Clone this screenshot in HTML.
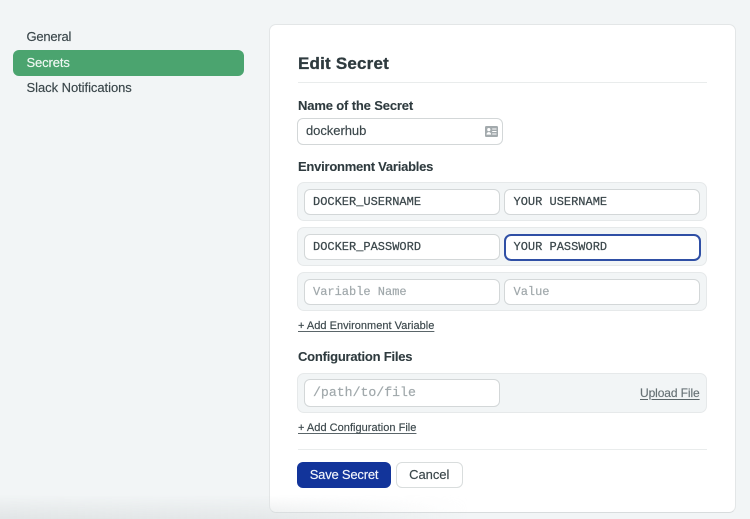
<!DOCTYPE html>
<html><head><meta charset="utf-8"><style>
html,body{margin:0;padding:0}
body{width:750px;height:519px;overflow:hidden;background:#f2f5f6;position:relative;font-family:"Liberation Sans",sans-serif;color:#2f3b3f}
#w{position:absolute;left:0;top:0;width:750px;height:519px;filter:blur(.3px)}
.a{position:absolute;box-sizing:border-box;white-space:nowrap}
.t{position:absolute;white-space:nowrap;line-height:16px;-webkit-text-stroke:.15px currentColor}
.b{font-weight:700;-webkit-text-stroke:.1px currentColor}
.inp{position:absolute;box-sizing:border-box;background:#fff;border:1px solid #d3d7d8;border-radius:6px}
.row{position:absolute;box-sizing:border-box;background:#f2f5f6;border:1px solid #e6e9ea;border-radius:7px;left:297px;width:410px}
.m{position:absolute;font-family:"Liberation Mono",monospace;font-size:12px;line-height:16px;white-space:nowrap;color:#3a464a;-webkit-text-stroke:.22px currentColor}
.ph{color:#a0a8ab;-webkit-text-stroke:.2px currentColor}
.u{text-decoration:underline;text-underline-offset:2px;text-decoration-color:#5a6569}
.hr{position:absolute;height:1px;background:#e9ecec;left:298px;width:409px}
</style></head><body><div id="w">

<div class="t" style="left:26.5px;top:29px;font-size:13px;color:#3a464a;letter-spacing:-.22px">General</div>
<div class="a" style="left:13px;top:50px;width:231px;height:26px;background:#4ba46f;border-radius:6px"></div>
<div class="t" style="left:26.5px;top:55px;font-size:13px;color:#f0f8f3;letter-spacing:-.12px">Secrets</div>
<div class="t" style="left:26.5px;top:80px;font-size:13px;color:#3a464a;letter-spacing:-.05px">Slack Notifications</div>

<div class="a" style="left:269px;top:24px;width:467px;height:489px;background:#fff;border:1px solid #e3e6e7;border-bottom-color:#d8dcdd;border-radius:7px"></div>

<div class="t b" style="left:298px;top:55px;font-size:17px;line-height:18px;color:#2f3b3f;letter-spacing:.2px;-webkit-text-stroke:.3px currentColor">Edit Secret</div>
<div class="hr" style="top:82px"></div>

<div class="t b" style="left:298px;top:98px;font-size:13px;letter-spacing:-.15px">Name of the Secret</div>
<div class="inp" style="left:297px;top:118px;width:206px;height:27px"></div>
<div class="t" style="left:306px;top:123px;font-size:13px;color:#3a464a;letter-spacing:-.05px">dockerhub</div>
<svg class="a" style="left:485px;top:125.5px" width="13" height="11" viewBox="0 0 13 11"><rect width="13" height="11" rx="1.4" fill="#a3aaad"/><circle cx="3.8" cy="3.6" r="1.6" fill="#fff"/><path d="M1.5 8.6c0-1.6 1.1-2.5 2.3-2.5s2.3.9 2.3 2.5z" fill="#fff"/><path d="M7.2 3h4.3M7.2 5.5h4.3M7.2 8h4.3" stroke="#fff" stroke-width="1"/></svg>

<div class="t b" style="left:298px;top:159px;font-size:13px;letter-spacing:-.24px">Environment Variables</div>

<div class="row" style="top:182px;height:39px"></div>
<div class="inp" style="left:304px;top:189px;width:196px;height:26px"></div>
<div class="inp" style="left:504px;top:189px;width:196px;height:26px"></div>
<div class="m" style="left:313px;top:194px">DOCKER_USERNAME</div>
<div class="m" style="left:513.5px;top:194px">YOUR USERNAME</div>

<div class="row" style="top:227px;height:39px"></div>
<div class="inp" style="left:304px;top:234px;width:196px;height:26px"></div>
<div class="inp" style="left:504px;top:233.5px;width:197px;height:27px;border:2px solid #2f4fa5;border-radius:7px"></div>
<div class="m" style="left:313px;top:239px">DOCKER_PASSWORD</div>
<div class="m" style="left:513.5px;top:239px">YOUR PASSWORD</div>

<div class="row" style="top:272px;height:39px"></div>
<div class="inp" style="left:304px;top:279px;width:196px;height:26px"></div>
<div class="inp" style="left:504px;top:279px;width:196px;height:26px"></div>
<div class="m ph" style="left:313px;top:284px">Variable Name</div>
<div class="m ph" style="left:513.5px;top:284px">Value</div>

<div class="t u" style="left:298px;top:318px;font-size:11px;color:#3a464a;letter-spacing:.02px">+ Add Environment Variable</div>

<div class="t b" style="left:298px;top:349px;font-size:13px;letter-spacing:-.22px">Configuration Files</div>
<div class="row" style="top:373px;height:40px"></div>
<div class="inp" style="left:304px;top:379px;width:196px;height:28px"></div>
<div class="m ph" style="left:313px;top:385px;font-size:13.2px;letter-spacing:0">/path/to/file</div>
<div class="t u" style="left:640px;top:384.5px;font-size:12px;color:#667175;letter-spacing:-.1px">Upload File</div>

<div class="t u" style="left:298px;top:420px;font-size:11px;color:#3a464a;letter-spacing:.03px">+ Add Configuration File</div>
<div class="hr" style="top:449px"></div>

<div class="a" style="left:297px;top:461.5px;width:94px;height:26.5px;background:#12349a;border-radius:6px"></div>
<div class="t" style="left:297px;width:94px;text-align:center;top:467px;font-size:13px;color:#f2f5fb;letter-spacing:-.2px">Save Secret</div>
<div class="a" style="left:396px;top:461.5px;width:66.5px;height:26.5px;background:#fff;border:1px solid #d9dddd;border-radius:6px"></div>
<div class="t" style="left:396px;width:66.5px;text-align:center;top:467px;font-size:13px;color:#3a464a;letter-spacing:-.05px">Cancel</div>

<div class="a" style="left:0;top:495px;width:470px;height:24px;background:linear-gradient(to right,rgba(222,226,227,.85) 0%,rgba(222,226,227,.7) 55%,rgba(222,226,227,0) 100%);-webkit-mask-image:linear-gradient(to bottom,transparent,#000);mask-image:linear-gradient(to bottom,transparent,#000)"></div>
</div></body></html>
